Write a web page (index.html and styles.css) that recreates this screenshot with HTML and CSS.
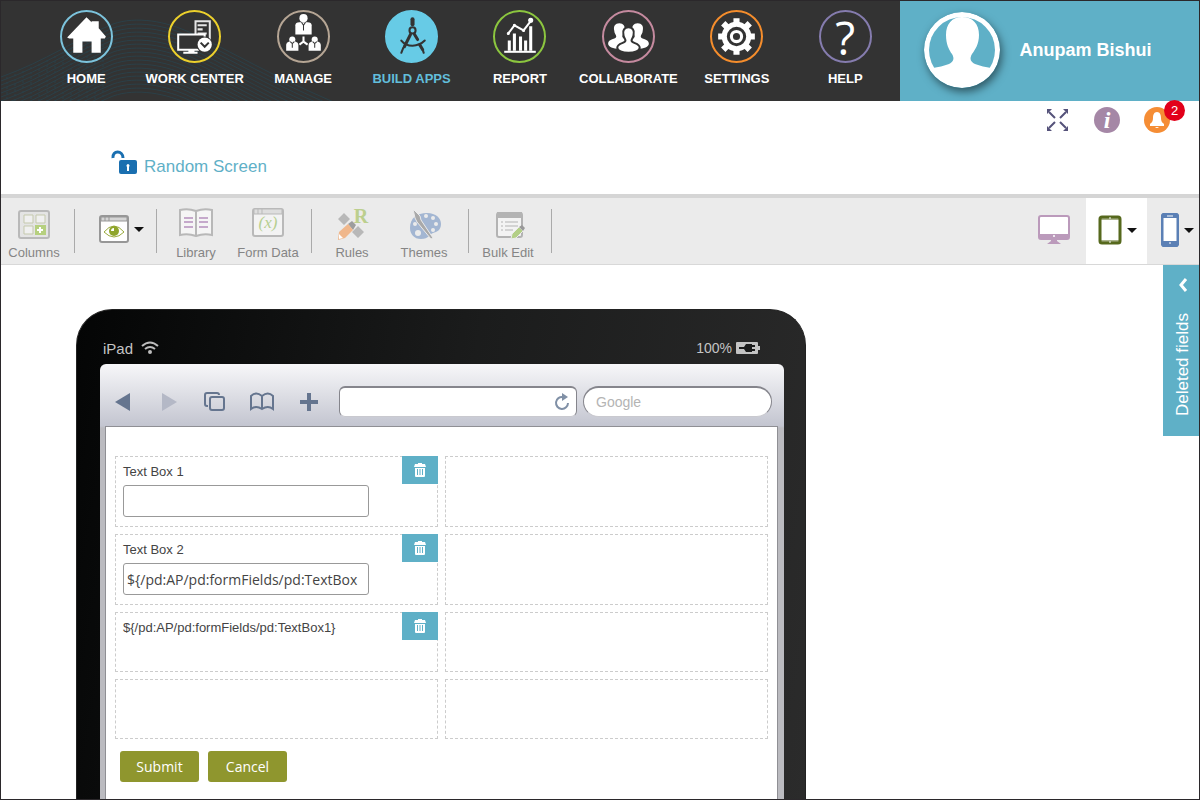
FILE: index.html
```html
<!-- index.html - Screen builder, tablet preview -->
<!DOCTYPE html>
<html lang="en">
<head>
  <meta charset="UTF-8">
  <meta name="viewport" content="width=device-width, initial-scale=1.0">
  <title>Random Screen</title>
  <link rel="stylesheet" href="styles.css">
</head>
<body>
  <header class="topbar">
    <svg class="waves" viewBox="0 0 340 100" width="340" height="100" aria-hidden="true">
      <defs>
        <path id="wave" d="M0 76C45 60 75 38 112 23C135 15 165 20 190 32C230 50 270 75 340 104"/>
      </defs>
      <use href="#wave" y="0"/>
      <use href="#wave" y="4"/>
      <use href="#wave" y="8"/>
      <use href="#wave" y="12"/>
      <use href="#wave" y="16"/>
      <use href="#wave" y="20"/>
      <use href="#wave" y="24"/>
      <use href="#wave" y="28"/>
      <use href="#wave" y="32"/>
      <use href="#wave" y="36"/>
      <use href="#wave" y="40"/>
      <use href="#wave" y="44"/>
      <use href="#wave" y="48"/>
      <use href="#wave" y="52"/>
      <use href="#wave" y="56"/>
      <use href="#wave" y="60"/>
      <use href="#wave" y="64"/>
      <use href="#wave" y="68"/>
      <use href="#wave" y="72"/>
      <path class="dots" d="M6 76V100M14 73V100M22 70V100M30 66V100M38 63V100M46 59V100M54 55V100M62 51V100M70 47V100M78 43V100M86 40V100M94 36V100M102 34V100"/>
    </svg>

    <nav class="main-nav">
      <a href="#" class="nav-item">
        <span class="ring ring-home">
          <svg viewBox="0 0 52 52"><path fill="#fff" d="M26 7l5 5v-1h7v7l7 8-1 2h-4v14h-9V31h-9v11h-9V28H9l-2-1z"/></svg>
        </span>
        HOME
      </a>
      <a href="#" class="nav-item">
        <span class="ring ring-work">
          <svg viewBox="0 0 52 52">
            <path fill="#333" stroke="#e6e6e6" stroke-width="2" d="M27 11h14v20H27z"/>
            <path stroke="#e6e6e6" stroke-width="2" d="M29 15h9M29 19h5M29 23h9"/>
            <path fill="#333" stroke="#fff" stroke-width="2" d="M10 24h26v15H10z"/>
            <path fill="#fff" d="M20 39h6v2h3v2H15v-2h5z"/>
            <circle cx="36" cy="34" r="8" fill="#333"/>
            <circle cx="36" cy="34" r="7" fill="#fff"/>
            <path fill="none" stroke="#333" stroke-width="2" d="M32 32l4 4 4-4"/>
          </svg>
        </span>
        WORK CENTER
      </a>
      <a href="#" class="nav-item">
        <span class="ring ring-manage">
          <svg viewBox="0 0 52 52">
            <g fill="#fff">
              <circle cx="26" cy="8" r="4"/><path d="M18 24v-9q0-3 4-3h8q4 0 4 3v9z"/>
              <circle cx="15" cy="29" r="3"/><path d="M9 40v-6q0-2 3-3h6q3 1 3 3v6z"/>
              <circle cx="37" cy="29" r="3"/><path d="M31 40v-6q0-2 3-3h6q3 1 3 3v6z"/>
            </g>
            <path fill="none" stroke="#333" d="M24 12l2 3 2-3M26 14v6M13 31l2 2 2-2M15 33v4M35 31l2 2 2-2M37 33v4"/>
            <path fill="none" stroke="#fff" stroke-width="2" d="M26 26v5l-4 3M26 31l4 3"/>
          </svg>
        </span>
        MANAGE
      </a>
      <a href="#" class="nav-item active">
        <span class="ring ring-build">
          <svg viewBox="0 0 52 52" fill="none" stroke="#333" stroke-linecap="round">
            <path stroke-width="4" d="M27 9v5"/>
            <circle cx="27" cy="20" r="3" stroke-width="2"/>
            <path stroke-width="3" d="M25 24l-6 12M29 24l3 5M34 34l3 5"/>
            <path stroke-width="2" d="M18 37l-2 5M37 39l1 3M16 30q4 5 11 5t12-5"/>
          </svg>
        </span>
        BUILD APPS
      </a>
      <a href="#" class="nav-item">
        <span class="ring ring-report">
          <svg viewBox="0 0 52 52" fill="none" stroke="#fff">
            <path stroke-width="2" d="M11 41h31"/>
            <path stroke-width="3" d="M16 40V30M21 40V23M27 40V26M32 40V30M37 40V16"/>
            <path stroke-width="2" d="M15 23l6-8 9 5 7-9"/>
            <g fill="#fff"><circle cx="15" cy="23" r="1"/><circle cx="21" cy="15" r="1"/><circle cx="30" cy="20" r="1"/><circle cx="37" cy="10" r="2"/></g>
          </svg>
        </span>
        REPORT
      </a>
      <a href="#" class="nav-item">
        <span class="ring ring-collab">
          <svg viewBox="0 0 52 52">
            <defs><path id="person" d="M0-13c4 0 6 3 5 7 0 3-2 4-2 6 0 3 8 2 8 7 0 3-5 5-11 5s-11-2-11-5c0-5 8-4 8-7 0-2-2-3-2-6-1-4 1-7 5-7z"/></defs>
            <g fill="#fff">
              <use href="#person" x="17" y="26"/><use href="#person" x="35" y="26"/>
            </g>
            <use href="#person" x="26" y="30" fill="#fff" stroke="#333" stroke-width="2"/>
          </svg>
        </span>
        COLLABORATE
      </a>
      <a href="#" class="nav-item">
        <span class="ring ring-settings">
          <svg viewBox="0 0 52 52" fill="none" stroke="#fff">
            <circle cx="26" cy="26" r="12" stroke-width="5"/>
            <path stroke-width="6" d="M26 8v6M26 38v6M8 26h6M38 26h6M13 13l5 5M34 34l5 5M39 13l-5 5M18 34l-5 5"/>
            <circle cx="26" cy="26" r="5" stroke-width="3"/>
          </svg>
        </span>
        SETTINGS
      </a>
      <a href="#" class="nav-item">
        <span class="ring ring-help">?</span>
        HELP
      </a>
    </nav>

    <div class="user-panel">
      <svg class="avatar" viewBox="0 0 76 76" aria-hidden="true">
        <circle cx="38" cy="38" r="38" fill="#fff"/>
        <circle cx="38" cy="38" r="33" fill="#5fb0c7"/>
        <path fill="#fff" d="M38 5c11 0 17 7 17 18 0 9-4 15-7 19-3 5-1 8 3 10 5 2 11 3 16 4-8 12-18 16-29 16S17 68 9 56c5-1 11-2 16-4 4-2 6-5 3-10-3-4-6-10-6-19C22 12 28 5 38 5z"/>
      </svg>
      <span class="user-name">Anupam Bishui</span>
    </div>
  </header>

  <section class="page-head">
    <div class="quick-actions">
      <button class="icon-btn" aria-label="Full screen">
        <svg viewBox="0 0 26 26" width="26" height="26">
          <path fill="none" stroke="#55527a" stroke-width="2" d="M5 5l6 6M22 5l-6 6M5 21l6-6M22 21l-6-6"/>
          <path fill="#55527a" d="M3 2h5L3 7zM24 2v5l-5-5zM3 24v-5l5 5zM24 24h-5l5-5z"/>
        </svg>
      </button>
      <button class="icon-btn" aria-label="Information">
        <svg viewBox="0 0 26 26" width="26" height="26">
          <circle cx="13" cy="13" r="13" fill="#a587a6"/>
          <text x="13" y="21" class="info-i">i</text>
        </svg>
      </button>
      <button class="icon-btn" aria-label="Notifications">
        <svg viewBox="0 0 26 26" width="26" height="26">
          <circle cx="13" cy="13" r="13" fill="#f58d35"/>
          <path fill="#fff" d="M13 5c3 0 4 3 4 6 0 4 2 5 3 6v2H6v-2c1-1 3-2 3-6 0-3 1-6 4-6zM11 20h4q-2 2-4 0z"/>
        </svg>
        <span class="badge">2</span>
      </button>
    </div>
    <h1 class="screen-title">
      <svg viewBox="0 0 26 24" width="26" height="24" aria-hidden="true">
        <path fill="none" stroke="#1a6fb0" stroke-width="3" d="M2 8C1 0 12 0 12 8"/>
        <rect x="8" y="10" width="18" height="14" rx="2" fill="#1a6fb0"/>
        <path fill="#fff" d="M17 14a2 2 0 0 1 1 3v4h-2v-4a2 2 0 0 1 1-3z"/>
      </svg>
      <span>Random Screen</span>
    </h1>
  </section>

  <div class="toolbar">
    <div class="tool-group group-first">
      <button class="tool">
        <svg viewBox="0 0 36 32" width="36" height="32">
          <rect x="3" y="3" width="30" height="27" rx="2" fill="#e4e4e4" stroke="#b9b9b9" stroke-width="2"/>
          <path fill="#f0f0f0" stroke="#c5c9ad" d="M8 7h9v8H8zM20 7h9v8h-9zM8 18h9v8H8z"/>
          <path fill="#b6d07f" d="M19 17h11v10H19z"/>
          <path stroke="#fff" stroke-width="2" d="M24 19v6M21 22h6"/>
        </svg>
        Columns
      </button>
    </div>
    <div class="tool-group group-preview">
      <button class="tool-menu" aria-label="Preview">
        <svg viewBox="0 0 30 28" width="30" height="28">
          <rect x="1" y="1" width="28" height="26" rx="2" fill="#fff" stroke="#979797" stroke-width="2"/>
          <path fill="#d5d5d5" stroke="#979797" d="M2 2h26v4H2zM6 2v4M10 2v4"/>
          <path fill="#fff" stroke="#9aaa3c" stroke-width="1" d="M5 17q10-12 20 0-10 10-20 0z"/>
          <circle cx="15" cy="16" r="5" fill="#8fa52c"/>
          <path fill="#fff" d="M15 16v-3a3 3 0 0 0-3 3z"/>
        </svg>
        <span class="caret"></span>
      </button>
    </div>
    <div class="tool-group">
      <button class="tool">
        <svg viewBox="0 0 36 32" width="36" height="32">
          <path fill="#f5f5f5" stroke="#b8b8b8" stroke-width="2" d="M2 2q8-2 16 1 8-3 16-1v25q-8-2-16 1-8-3-16-1zM18 3v25"/>
          <path stroke="#c5a9cb" stroke-width="2" d="M6 10h9M6 14h9M6 19h9M21 10h9M21 14h9M21 19h9"/>
        </svg>
        Library
      </button>
      <button class="tool">
        <svg viewBox="0 0 36 32" width="36" height="32">
          <rect x="3" y="1" width="30" height="27" rx="2" fill="#f3f3f3" stroke="#b9b9b9" stroke-width="2"/>
          <path fill="#dedede" stroke="#b9b9b9" d="M4 1h28v5H4zM8 1v5M12 1v5"/>
          <text x="18" y="20" class="form-x">(x)</text>
        </svg>
        Form Data
      </button>
    </div>
    <div class="tool-group group-wide">
      <button class="tool">
        <svg viewBox="0 0 36 32" width="36" height="32">
          <path fill="#b8b8b8" d="M10 5l6 6-6 6-6-6zM24 18l6 6-6 6-6-6z"/>
          <path fill="#9d9d9d" d="M14 16l4-3 4 4-3 5z"/>
          <path fill="#f0b78b" d="M5 24l9-8 5 6-8 8-7 2z"/>
          <path fill="#fff" d="M5 26l4 4-4 1z"/>
          <text x="27" y="15" class="rules-r">R</text>
        </svg>
        Rules
      </button>
      <button class="tool">
        <svg viewBox="0 0 36 32" width="36" height="32">
          <path fill="#a3b6d2" d="M21 5c9 0 14 5 14 11 0 6-4 8-8 9-3 1-4 6-12 6-7 0-11-5-11-11C4 10 11 5 21 5z"/>
          <g fill="#ebebeb"><circle cx="9" cy="16" r="2"/><circle cx="12" cy="25" r="3"/><circle cx="20" cy="8" r="2"/><circle cx="27" cy="10" r="2"/><circle cx="30" cy="16" r="2"/><circle cx="27" cy="22" r="2"/></g>
          <path fill="#a9a9a9" stroke="#ebebeb" d="M7 1l7 7 1 4 12 18-2 1-14-17-2-4z"/>
        </svg>
        Themes
      </button>
    </div>
    <div class="tool-group">
      <button class="tool">
        <svg viewBox="0 0 36 32" width="36" height="32">
          <rect x="7" y="5" width="25" height="24" rx="2" fill="#f3f3f3" stroke="#b3b3b3" stroke-width="2"/>
          <path fill="#b3b3b3" d="M7 4h25v6H7z"/>
          <path stroke="#b3b3b3" stroke-width="1" d="M11 14h2M15 14h13M11 18h2M15 18h13M11 22h2M15 22h8"/>
          <path fill="#b3cf86" stroke="#ebebeb" d="M22 26l7-7 4 4-7 7-5 1z"/>
          <path fill="#999" d="M29 19l3-2 3 3-2 3z"/>
        </svg>
        Bulk Edit
      </button>
    </div>

    <div class="devices">
      <button class="device device-desktop" aria-label="Desktop">
        <svg viewBox="0 0 32 30" width="32" height="30">
          <rect x="1" y="1" width="30" height="23" rx="2" fill="#fff" stroke="#bb9abb" stroke-width="2"/>
          <path fill="#bb9abb" d="M1 19h30v4q0 1-1 1H2q-1 0-1-1zM13 24h6v2l4 3H9l4-3z"/>
          <circle cx="16" cy="21" r="1" fill="#fff"/>
        </svg>
      </button>
      <button class="device device-active" aria-label="Tablet">
        <svg viewBox="0 0 24 30" width="24" height="30">
          <rect x="2" y="2" width="20" height="26" rx="2" fill="#fff" stroke="#56691d" stroke-width="3"/>
          <path stroke="#56691d" stroke-width="1" d="M2 4h20M2 26h20"/>
          <path stroke="#fff" d="M11 3h2M11 27h2"/>
        </svg>
        <span class="caret"></span>
      </button>
      <button class="device device-phone" aria-label="Phone">
        <svg viewBox="0 0 18 34" width="18" height="34">
          <rect x="1" y="1" width="16" height="32" rx="3" fill="#fff" stroke="#5b80b5" stroke-width="3"/>
          <path fill="#5b80b5" d="M1 2h16v3H1zM1 28h16v4H1z"/>
          <path stroke="#fff" d="M6 3h6M8 30h2"/>
        </svg>
        <span class="caret"></span>
      </button>
    </div>
  </div>

  <main class="workspace">
    <div class="tablet">
      <div class="status-bar">
        <span class="carrier">iPad
          <svg viewBox="0 0 18 14" width="18" height="14" fill="none" stroke="#bdbdbd" stroke-width="2">
            <path d="M1 5q8-7 16 0M4 8q5-4 10 0"/><circle cx="9" cy="11" r="1" fill="#bdbdbd"/>
          </svg>
        </span>
        <span class="battery">100%
          <svg viewBox="0 0 24 12" width="24" height="12">
            <rect width="22" height="12" rx="1" fill="#c4c4c4"/><path fill="#c4c4c4" d="M22 4h2v4h-2z"/>
            <path fill="#1b1c1c" d="M3 5h5l2-3h6v1h3v2h-3v2h3v2h-3v1h-6L8 7H3z"/>
          </svg>
        </span>
      </div>

      <div class="browser">
        <div class="browser-bar">
          <div class="browser-icons">
            <svg viewBox="0 0 24 24" width="24" height="24"><path fill="#65758f" d="M4 12l15-9v18z"/></svg>
            <svg viewBox="0 0 24 24" width="24" height="24"><path fill="#b4b8c6" d="M20 12L5 3v18z"/></svg>
            <svg viewBox="0 0 24 24" width="24" height="24" fill="none" stroke="#65758f" stroke-width="2"><path d="M5 16H4q-2 0-2-2V5q0-2 2-2h10q2 0 2 2"/><rect x="7" y="7" width="14" height="13" rx="2"/></svg>
            <svg viewBox="0 0 26 24" width="26" height="24" fill="none" stroke="#65758f" stroke-width="2"><path d="M2 19V6q5-5 11 0 6-5 11 0v13q-5-4-11 0-6-4-11 0zM13 6v13"/></svg>
            <svg viewBox="0 0 24 24" width="24" height="24"><path stroke="#65758f" stroke-width="4" d="M12 3v18M3 12h18"/></svg>
          </div>
          <div class="url-box">
            <input type="text" class="url-input" aria-label="Address">
            <svg viewBox="0 0 16 18" width="16" height="18"><path fill="none" stroke="#8090a6" stroke-width="2" d="M9 4a6 6 0 1 0 5 6"/><path fill="#8090a6" d="M8 0l6 4-6 4z"/></svg>
          </div>
          <input type="search" class="search-input" placeholder="Google" aria-label="Search">
        </div>

        <form class="canvas">
          <div class="field-grid">
            <div class="cell">
              <label for="textBox1">Text Box 1</label>
              <input type="text" id="textBox1">
              <button type="button" class="delete-btn" aria-label="Delete Text Box 1"><svg viewBox="0 0 12 14" width="12" height="14"><path fill="#fff" d="M4 0h4v1h3l1 3H0l1-3h3zM1 5h10v8q0 1-1 1H2q-1 0-1-1z"/><path stroke="#5fb0c7" stroke-width="1" d="M3.500 6v6M6 6v6M8.500 6v6"/></svg></button>
            </div>
            <div class="cell"></div>
            <div class="cell">
              <label for="textBox2">Text Box 2</label>
              <input type="text" id="textBox2" value="${/pd:AP/pd:formFields/pd:TextBox">
              <button type="button" class="delete-btn" aria-label="Delete Text Box 2"><svg viewBox="0 0 12 14" width="12" height="14"><path fill="#fff" d="M4 0h4v1h3l1 3H0l1-3h3zM1 5h10v8q0 1-1 1H2q-1 0-1-1z"/><path stroke="#5fb0c7" stroke-width="1" d="M3.500 6v6M6 6v6M8.500 6v6"/></svg></button>
            </div>
            <div class="cell"></div>
            <div class="cell">
              <span>${/pd:AP/pd:formFields/pd:TextBox1}</span>
              <button type="button" class="delete-btn" aria-label="Delete text"><svg viewBox="0 0 12 14" width="12" height="14"><path fill="#fff" d="M4 0h4v1h3l1 3H0l1-3h3zM1 5h10v8q0 1-1 1H2q-1 0-1-1z"/><path stroke="#5fb0c7" stroke-width="1" d="M3.500 6v6M6 6v6M8.500 6v6"/></svg></button>
            </div>
            <div class="cell"></div>
            <div class="cell"></div>
            <div class="cell"></div>
          </div>
          <div class="form-actions">
            <button type="button" class="form-btn">Submit</button>
            <button type="button" class="form-btn">Cancel</button>
          </div>
        </form>
      </div>
    </div>

    <button class="deleted-tab">
      <svg viewBox="0 0 12 16" width="12" height="16"><path fill="none" stroke="#fff" stroke-width="3" d="M9 2L4 8l5 6"/></svg>
      <span>Deleted fields</span>
    </button>
  </main>
</body>
</html>
```
FILE: styles.css
```css
* {
  box-sizing: border-box;
}

body {
  margin: 0;
  min-height: 100vh;
  display: flex;
  flex-direction: column;
  border: 1px solid #2b282b;
  background: #fff;
  font-family: "Liberation Sans", Arial, sans-serif;
  color: #444;
}

button {
  border: none;
  padding: 0;
  background: none;
  font-family: inherit;
  cursor: pointer;
}

svg {
  display: block;
}

/* Top bar */
.topbar {
  position: relative;
  display: flex;
  height: 100px;
  background: #333;
}

.waves {
  position: absolute;
  left: 0;
  top: 0;
  fill: none;
  stroke: #1f5468;
  opacity: 0.4;
}

.waves .dots {
  stroke-dasharray: 2 3;
}

.main-nav {
  position: relative;
  flex: 1;
  display: grid;
  grid-template-columns: repeat(8, 1fr);
  padding: 9px 0 0 31px;
}

.nav-item {
  display: flex;
  flex-direction: column;
  align-items: center;
  gap: 7px;
  color: #fff;
  font-size: 13px;
  font-weight: bold;
  line-height: 18px;
  text-decoration: none;
  white-space: nowrap;
}

.nav-item.active {
  color: #62bedb;
}

.ring {
  width: 53px;
  height: 53px;
  border: 2px solid #fff;
  border-radius: 50%;
}

.ring svg {
  width: 53px;
  height: 53px;
  margin: -2px;
}

.ring-home { border-color: #7cc3dc; }
.ring-work { border-color: #ecd02c; }
.ring-manage { border-color: #b5a594; }
.ring-build { border-color: #67cbe6; background: #67cbe6; }
.ring-report { border-color: #8cc63f; }
.ring-collab { border-color: #c58a9f; }
.ring-settings { border-color: #f58d2c; }

.ring-help {
  border-color: #857cae;
  font-family: "Open Sans", sans-serif;
  font-size: 46px;
  font-weight: normal;
  line-height: 50px;
  text-align: center;
}

.user-panel {
  width: 25%;
  display: flex;
  align-items: center;
  gap: 20px;
  padding: 0 0 2px 24px;
  background: #5fb0c7;
}

.avatar {
  width: 76px;
  height: 76px;
  border-radius: 50%;
  box-shadow: 2px 4px 8px rgba(0, 0, 0, 0.5);
}

.user-name {
  color: #fff;
  font-size: 18px;
  font-weight: bold;
}

/* Page head */
.page-head {
  height: 93px;
  padding: 6px 29px 0 110px;
}

.quick-actions {
  display: flex;
  justify-content: flex-end;
  gap: 24px;
}

.icon-btn {
  position: relative;
}

.info-i {
  fill: #fff;
  font-family: "Liberation Serif", serif;
  font-size: 24px;
  font-style: italic;
  font-weight: bold;
  text-anchor: middle;
}

.badge {
  position: absolute;
  top: -7px;
  right: -15px;
  width: 21px;
  height: 21px;
  border-radius: 50%;
  background: #e2001a;
  color: #fff;
  font-size: 13px;
  line-height: 21px;
}

.screen-title {
  display: flex;
  align-items: flex-end;
  gap: 7px;
  margin: 17px 0 0;
  color: #5fb0c7;
  font-size: 17px;
  font-weight: normal;
  line-height: 14px;
}

/* Toolbar */
.toolbar {
  display: flex;
  height: 71px;
  border-top: 4px solid #d5d5d5;
  border-bottom: 1px solid #d8d8d8;
  background: #ebebeb;
}

.tool-group {
  display: flex;
  align-items: center;
  height: 44px;
  margin-top: 11px;
  padding: 0 7px 0 3px;
  border-right: 1px solid #aaa;
}

.group-first {
  padding: 0 7px 0 0;
}

.group-first .tool {
  width: 66px;
}

.group-preview {
  padding: 0 12px 4px 24px;
}

.group-wide {
  padding: 0 8px 0 4px;
}

.tool {
  display: flex;
  flex-direction: column;
  align-items: center;
  gap: 5px;
  width: 72px;
  margin-top: 6px;
  color: #858585;
  font-size: 13px;
  line-height: 16px;
  white-space: nowrap;
}

.tool-menu {
  display: flex;
  align-items: center;
  gap: 5px;
}

.caret {
  border: 5px solid transparent;
  border-top-color: #111;
  border-bottom-width: 0;
}

.devices {
  display: flex;
  margin-left: auto;
}

.device {
  display: flex;
  align-items: center;
  gap: 5px;
  padding: 0 10px 2px 12px;
}

.device-desktop {
  padding: 0 16px 2px;
}

.device-active {
  background: #fff;
}

.device-phone {
  padding: 0 5px 2px 14px;
}

/* Workspace */
.workspace {
  position: relative;
  flex: 1;
  display: flex;
  padding: 44px 40px 0 75px;
}

.tablet {
  flex: 1;
  display: flex;
  flex-direction: column;
  max-width: 730px;
  padding: 0 21px 0 23px;
  border: 1px solid #222;
  border-bottom: none;
  border-radius: 36px 36px 0 0;
  background: linear-gradient(100deg, #040505, #1b1c1c 50%, #2b2b2b);
}

.status-bar {
  display: flex;
  justify-content: space-between;
  height: 54px;
  padding: 28px 24px 0 3px;
  color: #c4c4c4;
}

.carrier,
.battery {
  display: flex;
  align-items: center;
  height: 20px;
}

.carrier {
  gap: 8px;
  font-size: 15px;
}

.battery {
  gap: 4px;
  font-size: 14px;
}

.browser {
  flex: 1;
  display: flex;
  flex-direction: column;
  padding: 0 6px 0 5px;
  border-radius: 6px 6px 0 0;
  background: linear-gradient(#f7f7f9, #c3c5d0 62px, #bbbbc0 64px);
}

.browser-bar {
  display: flex;
  align-items: center;
  gap: 6px;
  height: 62px;
  padding: 13px 6px 0;
}

.browser-icons {
  display: flex;
  justify-content: space-between;
  width: 210px;
  margin-right: 12px;
}

.url-box,
.search-input {
  height: 31px;
  border: 1px solid #85858c;
  border-top-width: 2px;
  border-bottom-color: #c9c9cf;
  background: #fff;
}

.url-box {
  flex: 1;
  display: flex;
  align-items: center;
  padding-right: 6px;
  border-radius: 6px;
}

.url-input {
  flex: 1;
  min-width: 0;
  border: none;
  background: none;
}

.search-input {
  width: 189px;
  padding: 0 12px;
  border-radius: 16px;
  font-family: inherit;
  font-size: 14px;
}

.search-input::placeholder {
  color: #b4b4b4;
}

/* Form being edited */
.canvas {
  flex: 1;
  margin: 0;
  padding: 29px 9px 16px;
  border: 1px solid #8f8f94;
  border-bottom: none;
  background: #fff;
  font-size: 13px;
}

.field-grid {
  display: grid;
  grid-template-columns: 1fr 1fr;
  grid-auto-rows: minmax(60px, auto);
  gap: 7px;
}

.cell {
  position: relative;
  padding: 6px 7px 9px;
  border: 1px dashed #ccc;
  line-height: 18px;
}

.cell label {
  display: block;
  margin-bottom: 4px;
}

.cell input {
  display: block;
  width: 246px;
  max-width: 100%;
  height: 32px;
  padding: 0 3px;
  border: 1px solid #999;
  border-radius: 3px;
  color: #444;
  font-family: "Open Sans", sans-serif;
  font-size: 14px;
}

.delete-btn {
  position: absolute;
  top: -1px;
  right: -1px;
  display: flex;
  align-items: center;
  justify-content: center;
  width: 36px;
  height: 28px;
  background: #5fb0c7;
}

.form-actions {
  display: flex;
  gap: 9px;
  padding: 12px 5px 0;
}

.form-btn {
  width: 79px;
  height: 31px;
  border-radius: 3px;
  background: #8f962e;
  color: #fff;
  font-family: "Open Sans", sans-serif;
  font-size: 14px;
}

.deleted-tab {
  position: absolute;
  top: 0;
  right: 0;
  display: flex;
  flex-direction: column;
  align-items: center;
  gap: 20px;
  width: 36px;
  padding: 12px 0 20px 3px;
  background: #5fb0c7;
  color: #fff;
  font-size: 17px;
}

.deleted-tab span {
  writing-mode: vertical-rl;
  transform: rotate(180deg);
}

.form-x {
  fill: #b6cf91;
  font-family: "Liberation Serif", serif;
  font-size: 17px;
  font-style: italic;
  text-anchor: middle;
}

.rules-r {
  fill: #bccf8e;
  font-family: "Liberation Serif", serif;
  font-size: 20px;
  font-weight: bold;
  text-anchor: middle;
}
```
